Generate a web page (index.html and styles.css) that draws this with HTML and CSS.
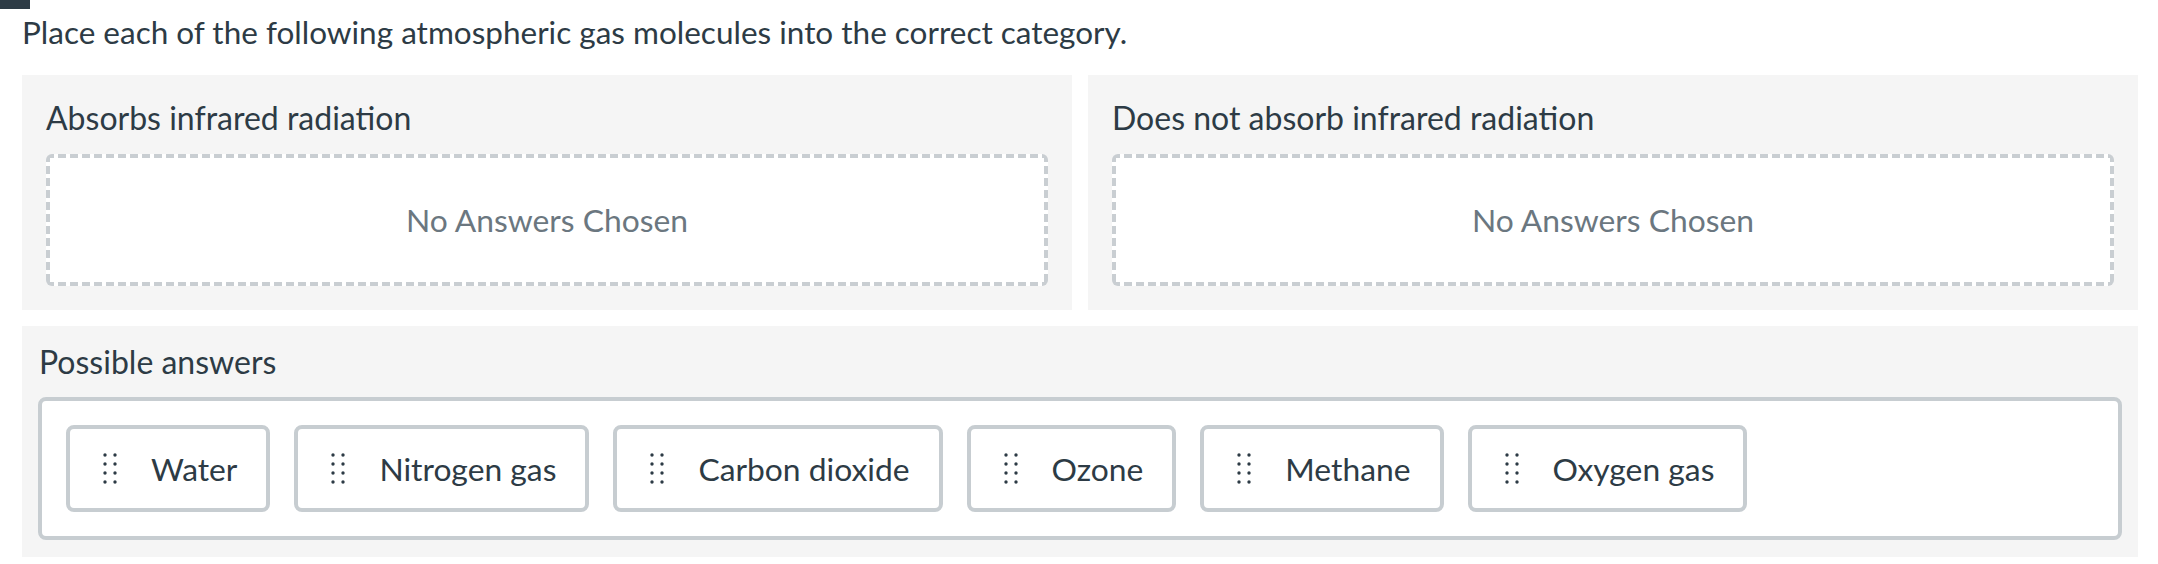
FILE: index.html
```html
<!DOCTYPE html>
<html lang="en">
<head>
<meta charset="utf-8">
<title>Categorization question</title>
<link rel="stylesheet" href="styles.css">
</head>
<body>
<div class="topbar"></div>
<div class="page">
  <p class="title">Place each of the following atmospheric gas molecules into the correct category.</p>
  <div class="zones">
    <section class="zone">
      <h2 class="zone-heading">Absorbs infrared radiation</h2>
      <div class="dropzone"><span class="empty">No Answers Chosen</span></div>
    </section>
    <section class="zone">
      <h2 class="zone-heading">Does not absorb infrared radiation</h2>
      <div class="dropzone"><span class="empty">No Answers Chosen</span></div>
    </section>
  </div>
  <section class="answers">
    <h2 class="answers-heading">Possible answers</h2>
    <div class="answers-box">
      <div class="chip"><svg class="grip" width="14" height="31" viewBox="0 0 14 31"><g fill="#2d3b45"><circle cx="2" cy="2" r="1.7"/><circle cx="12" cy="2" r="1.7"/><circle cx="2" cy="11" r="1.7"/><circle cx="12" cy="11" r="1.7"/><circle cx="2" cy="20" r="1.7"/><circle cx="12" cy="20" r="1.7"/><circle cx="2" cy="29" r="1.7"/><circle cx="12" cy="29" r="1.7"/></g></svg><span class="chip-text">Water</span></div>
      <div class="chip"><svg class="grip" width="14" height="31" viewBox="0 0 14 31"><g fill="#2d3b45"><circle cx="2" cy="2" r="1.7"/><circle cx="12" cy="2" r="1.7"/><circle cx="2" cy="11" r="1.7"/><circle cx="12" cy="11" r="1.7"/><circle cx="2" cy="20" r="1.7"/><circle cx="12" cy="20" r="1.7"/><circle cx="2" cy="29" r="1.7"/><circle cx="12" cy="29" r="1.7"/></g></svg><span class="chip-text">Nitrogen gas</span></div>
      <div class="chip"><svg class="grip" width="14" height="31" viewBox="0 0 14 31"><g fill="#2d3b45"><circle cx="2" cy="2" r="1.7"/><circle cx="12" cy="2" r="1.7"/><circle cx="2" cy="11" r="1.7"/><circle cx="12" cy="11" r="1.7"/><circle cx="2" cy="20" r="1.7"/><circle cx="12" cy="20" r="1.7"/><circle cx="2" cy="29" r="1.7"/><circle cx="12" cy="29" r="1.7"/></g></svg><span class="chip-text">Carbon dioxide</span></div>
      <div class="chip"><svg class="grip" width="14" height="31" viewBox="0 0 14 31"><g fill="#2d3b45"><circle cx="2" cy="2" r="1.7"/><circle cx="12" cy="2" r="1.7"/><circle cx="2" cy="11" r="1.7"/><circle cx="12" cy="11" r="1.7"/><circle cx="2" cy="20" r="1.7"/><circle cx="12" cy="20" r="1.7"/><circle cx="2" cy="29" r="1.7"/><circle cx="12" cy="29" r="1.7"/></g></svg><span class="chip-text">Ozone</span></div>
      <div class="chip"><svg class="grip" width="14" height="31" viewBox="0 0 14 31"><g fill="#2d3b45"><circle cx="2" cy="2" r="1.7"/><circle cx="12" cy="2" r="1.7"/><circle cx="2" cy="11" r="1.7"/><circle cx="12" cy="11" r="1.7"/><circle cx="2" cy="20" r="1.7"/><circle cx="12" cy="20" r="1.7"/><circle cx="2" cy="29" r="1.7"/><circle cx="12" cy="29" r="1.7"/></g></svg><span class="chip-text">Methane</span></div>
      <div class="chip"><svg class="grip" width="14" height="31" viewBox="0 0 14 31"><g fill="#2d3b45"><circle cx="2" cy="2" r="1.7"/><circle cx="12" cy="2" r="1.7"/><circle cx="2" cy="11" r="1.7"/><circle cx="12" cy="11" r="1.7"/><circle cx="2" cy="20" r="1.7"/><circle cx="12" cy="20" r="1.7"/><circle cx="2" cy="29" r="1.7"/><circle cx="12" cy="29" r="1.7"/></g></svg><span class="chip-text">Oxygen gas</span></div>
    </div>
  </section>
</div>
</body>
</html>
```
FILE: styles.css
```css
* { box-sizing: border-box; }

html, body {
  margin: 0;
  padding: 0;
  background: #ffffff;
}

body {
  font-family: "Lato", "Open Sans", sans-serif;
  font-size: 31.8px;
  line-height: 36px;
  color: #2d3b45;
}

.topbar {
  width: 30px;
  height: 9px;
  background: #2d3b45;
}

.page {
  padding: 0 20px 0 22px;
}

.title {
  margin: 5px 0 25px 0;
  font-size: 31.5px;
  line-height: 36px;
  font-weight: 400;
}

.zones {
  display: grid;
  grid-template-columns: 1fr 1fr;
  gap: 16px;
}

.zone {
  background: #f5f5f5;
  padding: 25px 24px 24px 24px;
}

.zone-heading,
.answers-heading {
  margin: 0;
  font-size: 32px;
  line-height: 36px;
  font-weight: 400;
}

.zone-heading {
  margin-bottom: 18px;
}

.dropzone {
  height: 132px;
  border-radius: 6px;
  display: flex;
  align-items: center;
  justify-content: center;
  background:
    repeating-linear-gradient(90deg, #c9ced2 0 8px, transparent 8px 12px) left top / 100% 4px no-repeat,
    repeating-linear-gradient(90deg, #c9ced2 0 8px, transparent 8px 12px) left bottom / 100% 4px no-repeat,
    repeating-linear-gradient(180deg, #c9ced2 0 8px, transparent 8px 12px) left top / 4px 100% no-repeat,
    repeating-linear-gradient(180deg, #c9ced2 0 8px, transparent 8px 12px) right top / 4px 100% no-repeat,
    #ffffff;
}

.empty {
  color: #6b7780;
}

.answers {
  margin-top: 16px;
  background: #f5f5f5;
  padding: 18px 16px 17px 16px;
}

.answers-heading {
  padding-left: 1px;
  margin-bottom: 17px;
}

.answers-box {
  background: #ffffff;
  border: 4px solid #c7cdd1;
  border-radius: 8px;
  padding: 24px;
  display: flex;
  flex-wrap: wrap;
  gap: 24px;
}

.chip {
  height: 87px;
  background: #ffffff;
  border: 4px solid #c7cdd1;
  border-radius: 8px;
  padding: 0 29px 0 33px;
  display: flex;
  align-items: center;
  gap: 34px;
}

.grip {
  display: block;
  flex: none;
}

.chip-text {
  white-space: nowrap;
}
```
